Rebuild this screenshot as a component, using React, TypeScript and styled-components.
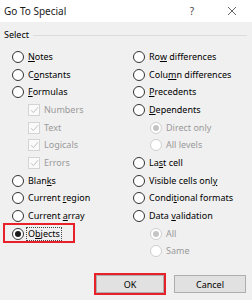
import React from "react";
import styled, { createGlobalStyle } from "styled-components";

const Global = createGlobalStyle`
  html, body { margin: 0; padding: 0; background: #f0f0f0; }
  body { font-family: "Noto Sans", "Open Sans", sans-serif; }
`;

const Dialog = styled.div`
  width: 252px;
  height: 300px;
  background: #f0f0f0;
  display: flex;
  flex-direction: column;
  color: #000;
  font-size: 9px;
  overflow: hidden;
`;

const TitleBar = styled.div`
  height: 22px;
  background: #fff;
  display: flex;
  align-items: center;
  padding: 0 0 0 4px;
  font-size: 10px;
  color: #1a1a1a;
`;

const Title = styled.div`
  flex: 1;
`;

const Help = styled.div`
  width: 12px;
  text-align: center;
  color: #444;
  font-size: 10px;
  margin-right: 29px;
`;

const Close = styled.div`
  width: 10px;
  height: 10px;
  margin-right: 15px;
  display: flex;
`;

const GroupHeader = styled.div`
  margin-top: 7px;
  height: 12px;
  display: flex;
  align-items: center;
  gap: 4px;
  padding: 0 5px 0 4px;
  line-height: 12px;
`;

const GroupLine = styled.div`
  flex: 1;
  height: 1px;
  background: #dcdcdc;
`;

const Grid = styled.div`
  margin-top: 7px;
  display: grid;
  grid-template-columns: 121px 1fr;
  padding-left: 12px;
`;

const Column = styled.div`
  display: flex;
  flex-direction: column;
`;

const Row = styled.div<{ $indent?: number; $disabled?: boolean; $marked?: boolean }>`
  position: relative;
  height: 17.7px;
  display: flex;
  align-items: center;
  gap: 4px;
  padding-left: ${(p) => p.$indent ?? 0}px;
  color: ${(p) => (p.$disabled ? "#9a9a9a" : "#000")};
  white-space: nowrap;
  ${(p) =>
    p.$marked &&
    `&::before {
      content: "";
      position: absolute;
      left: -9px;
      top: -2px;
      width: 68px;
      height: 16px;
      border: 2px solid #e8202a;
    }`}
`;

const RadioCircle = styled.span<{ $disabled?: boolean; $checked?: boolean }>`
  box-sizing: border-box;
  width: 12px;
  height: 12px;
  flex: none;
  border-radius: 50%;
  border: 1px solid ${(p) => (p.$disabled ? "#cfcfcf" : "#333")};
  background: #fff;
  display: flex;
  align-items: center;
  justify-content: center;
  &::after {
    content: "";
    display: ${(p) => (p.$checked ? "block" : "none")};
    width: 6px;
    height: 6px;
    border-radius: 50%;
    background: ${(p) => (p.$disabled ? "#c4c4c4" : "#1a1a1a")};
  }
`;

const CheckBox = styled.span`
  box-sizing: border-box;
  width: 12px;
  height: 12px;
  flex: none;
  border: 1px solid #d4d4d4;
  background: #fafafa;
  display: flex;
  align-items: center;
  justify-content: center;
`;

const Label = styled.span<{ $focus?: boolean }>`
  line-height: 12px;
  ${(p) =>
    p.$focus &&
    `outline: 1px dotted #444; outline-offset: 0px; padding: 0 1px; margin-left: -1px;`}
`;

const ButtonBar = styled.div`
  margin-top: 14px;
  display: flex;
  justify-content: flex-end;
  gap: 10px;
  padding-right: 6px;
`;

const Button = styled.button<{ $marked?: boolean; $w: number }>`
  box-sizing: border-box;
  width: ${(p) => p.$w}px;
  height: 18px;
  margin-top: 1px;
  background: #e1e1e1;
  border: 1px solid #adadad;
  font-family: inherit;
  font-size: 9px;
  color: #000;
  padding: 0;
  ${(p) => p.$marked && `outline: 2px solid #e8202a; outline-offset: 0px;`}
`;

const Check = () => (
  <svg width="9" height="8" viewBox="0 0 9 8">
    <path d="M1 4.2 L3.4 6.6 L8 1.2" fill="none" stroke="#c2c2c2" strokeWidth="1" />
  </svg>
);

type Item = {
  text: React.ReactNode;
  kind?: "radio" | "check" | "sub";
  checked?: boolean;
  marked?: boolean;
};

const Entry = ({ text, kind = "radio", checked, marked }: Item) => {
  const disabled = kind !== "radio";
  return (
    <Row $indent={kind === "check" ? 16 : kind === "sub" ? 17 : 0} $disabled={disabled} $marked={marked}>
      {kind === "check" ? (
        <CheckBox>
          <Check />
        </CheckBox>
      ) : (
        <RadioCircle $disabled={disabled} $checked={checked} />
      )}
      <Label $focus={marked}>{text}</Label>
    </Row>
  );
};

const left: Item[] = [
  { text: <><u>N</u>otes</> },
  { text: <>C<u>o</u>nstants</> },
  { text: <><u>F</u>ormulas</> },
  { text: "Numbers", kind: "check" },
  { text: "Text", kind: "check" },
  { text: "Logicals", kind: "check" },
  { text: "Errors", kind: "check" },
  { text: <>Blan<u>k</u>s</> },
  { text: <>Current <u>r</u>egion</> },
  { text: <>Current <u>a</u>rray</> },
  { text: <>O<u>b</u>jects</>, checked: true, marked: true },
];

const right: Item[] = [
  { text: <>Ro<u>w</u> differences</> },
  { text: <>Colu<u>m</u>n differences</> },
  { text: <><u>P</u>recedents</> },
  { text: <><u>D</u>ependents</> },
  { text: "Direct only", kind: "sub", checked: true },
  { text: "All levels", kind: "sub" },
  { text: <>La<u>s</u>t cell</> },
  { text: <>Visible cells onl<u>y</u></> },
  { text: <>Condi<u>t</u>ional formats</> },
  { text: <>Data <u>v</u>alidation</> },
  { text: "All", kind: "sub", checked: true },
  { text: "Same", kind: "sub" },
];

export default function App() {
  return (
    <>
      <Global />
      <Dialog>
        <TitleBar>
          <Title>Go To Special</Title>
          <Help>?</Help>
          <Close>
            <svg width="10" height="10" viewBox="0 0 10 10">
              <path d="M1 1 L9 9 M9 1 L1 9" stroke="#555" strokeWidth="0.9" fill="none" />
            </svg>
          </Close>
        </TitleBar>
        <GroupHeader>
          <span>Select</span>
          <GroupLine />
        </GroupHeader>
        <Grid>
          <Column>
            {left.map((it, i) => (
              <Entry key={i} {...it} />
            ))}
          </Column>
          <Column>
            {right.map((it, i) => (
              <Entry key={i} {...it} />
            ))}
          </Column>
        </Grid>
        <ButtonBar>
          <Button $w={68} $marked>OK</Button>
          <Button $w={72}>Cancel</Button>
        </ButtonBar>
      </Dialog>
    </>
  );
}
